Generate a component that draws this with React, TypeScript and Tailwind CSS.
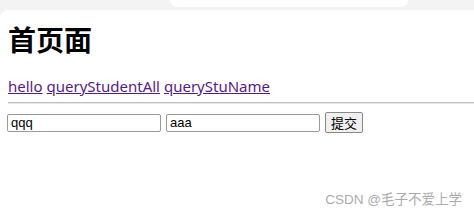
export default function App() {
  return (
    <div className="relative w-[474px] h-[215px] overflow-hidden bg-[#f3f3f3]">
      {/* browser chrome strip with tab */}
      <div className="h-[10px] flex">
        <div className="ml-[170px] w-[238px] h-[7px] bg-white rounded-b-[8px]" />
      </div>
      <div className="h-[205px] bg-white rounded-tl-[8px] px-[8px] font-['Noto_Sans','Noto_Sans_CJK_SC',sans-serif]">
        <h1 className="pt-[12px] text-[28px] leading-[34px] font-bold text-black font-['Noto_Sans_CJK_SC',sans-serif]">
          首页面
        </h1>
        <div className="mt-[19px] text-[15px] leading-[22px] text-[#551a8b] flex gap-[4px]">
          <a href="#" className="underline">hello</a>
          <a href="#" className="underline">queryStudentAll</a>
          <a href="#" className="underline">queryStuName</a>
        </div>
        <div className="mt-[5px] -mr-[8px] h-[2px] border-t border-[#c0c0c0] bg-[#e6e6e6]" />
        <div className="mt-[8px] -ml-[1px] flex items-center gap-[5px] font-['Liberation_Sans','Noto_Sans_CJK_SC',sans-serif]">
          <input
            defaultValue="qqq"
            className="w-[154px] h-[18px] border border-[#9a9a9a] rounded-[2px] px-[3px] text-[13px] text-black outline-none"
          />
          <input
            defaultValue="aaa"
            className="w-[154px] h-[18px] border border-[#9a9a9a] rounded-[2px] px-[3px] text-[13px] text-black outline-none"
          />
          <button className="w-[38px] h-[21px] border border-[#8a8a8a] rounded-[2px] bg-[#efefef] text-[13px] text-black font-['Noto_Sans_CJK_SC',sans-serif]">
            提交
          </button>
        </div>
      </div>
      <div className="absolute right-[12px] top-[191px] text-[13.5px] leading-[18px] text-[#ababab] font-['Liberation_Sans','Noto_Sans_CJK_SC',sans-serif]">
        CSDN @毛子不爱上学
      </div>
    </div>
  );
}
